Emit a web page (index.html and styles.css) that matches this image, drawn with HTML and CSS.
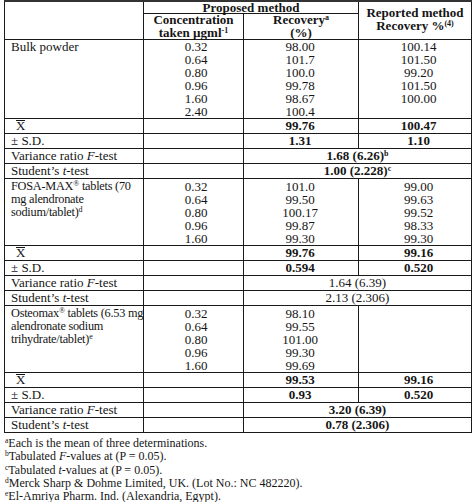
FILE: index.html
```html
<!DOCTYPE html>
<html>
<head>
<meta charset="utf-8">
<link rel="stylesheet" href="styles.css">
</head>
<body>
<table class="tbl">
  <colgroup>
    <col class="c1"><col class="c2"><col class="c3"><col class="c4">
  </colgroup>
  <thead>
    <tr>
      <th rowspan="2" class="blank"></th>
      <th colspan="2" class="top">Proposed method</th>
      <th rowspan="2" class="rep">Reported method<br>Recovery %<sup>(4)</sup></th>
    </tr>
    <tr>
      <th class="sub">Concentration<br>taken µgml<sup>-1</sup></th>
      <th class="sub">Recovery<sup>a</sup><br>(%)</th>
    </tr>
  </thead>
  <tbody>
    <tr class="data first">
      <td class="label">Bulk powder</td>
      <td class="conc">0.32<br>0.64<br>0.80<br>0.96<br>1.60<br>2.40</td>
      <td class="val">98.00<br>101.7<br>100.0<br>99.78<br>98.67<br>100.4</td>
      <td class="rval">100.14<br>101.50<br>99.20<br>101.50<br>100.00</td>
    </tr>
    <tr class="stat"><td class="label"><span class="xbar">X</span></td><td></td><td class="val b">99.76</td><td class="rval b">100.47</td></tr>
    <tr class="stat"><td class="label">± S.D.</td><td></td><td class="val b">1.31</td><td class="rval b">1.10</td></tr>
    <tr class="stat"><td class="label">Variance ratio <i>F</i>-test</td><td></td><td colspan="2" class="span b">1.68 (6.26)<sup>b</sup></td></tr>
    <tr class="stat"><td class="label">Student’s <i>t</i>-test</td><td></td><td colspan="2" class="span b">1.00 (2.228)<sup>c</sup></td></tr>

    <tr class="data">
      <td class="label tight">FOSA-MAX<sup>®</sup> tablets (70<br>mg alendronate<br>sodium/tablet)<sup>d</sup></td>
      <td class="conc">0.32<br>0.64<br>0.80<br>0.96<br>1.60</td>
      <td class="val">101.0<br>99.50<br>100.17<br>99.87<br>99.30</td>
      <td class="rval">99.00<br>99.63<br>99.52<br>98.33<br>99.30</td>
    </tr>
    <tr class="stat"><td class="label"><span class="xbar">X</span></td><td></td><td class="val b">99.76</td><td class="rval b">99.16</td></tr>
    <tr class="stat"><td class="label">± S.D.</td><td></td><td class="val b">0.594</td><td class="rval b">0.520</td></tr>
    <tr class="stat"><td class="label">Variance ratio <i>F</i>-test</td><td></td><td colspan="2" class="span">1.64 (6.39)</td></tr>
    <tr class="stat"><td class="label">Student’s <i>t</i>-test</td><td></td><td colspan="2" class="span">2.13 (2.306)</td></tr>

    <tr class="data">
      <td class="label tight">Osteomax<sup>®</sup> tablets (6.53 mg<br>alendronate sodium<br>trihydrate/tablet)<sup>e</sup></td>
      <td class="conc">0.32<br>0.64<br>0.80<br>0.96<br>1.60</td>
      <td class="val">98.10<br>99.55<br>101.00<br>99.30<br>99.69</td>
      <td class="rval"></td>
    </tr>
    <tr class="stat"><td class="label"><span class="xbar">X</span></td><td></td><td class="val b">99.53</td><td class="rval b">99.16</td></tr>
    <tr class="stat"><td class="label">± S.D.</td><td></td><td class="val b">0.93</td><td class="rval b">0.520</td></tr>
    <tr class="stat"><td class="label">Variance ratio <i>F</i>-test</td><td></td><td colspan="2" class="span b">3.20 (6.39)</td></tr>
    <tr class="stat"><td class="label">Student’s <i>t</i>-test</td><td></td><td colspan="2" class="span b">0.78 (2.306)</td></tr>
  </tbody>
</table>
<div class="notes">
  <p><sup>a</sup>Each is the mean of three determinations.</p>
  <p><sup>b</sup>Tabulated <i>F</i>-values at (P = 0.05).</p>
  <p><sup>c</sup>Tabulated <i>t</i>-values at (P = 0.05).</p>
  <p><sup>d</sup>Merck Sharp &amp; Dohme Limited, UK. (Lot No.: NC 482220).</p>
  <p><sup>e</sup>El-Amriya Pharm. Ind. (Alexandria, Egypt).</p>
</div>
</body>
</html>
```
FILE: styles.css
```css
html, body {
  margin: 0;
  padding: 0;
  background: #ffffff;
}
body {
  font-family: "Liberation Serif", "Times New Roman", serif;
  font-size: 13px;
  color: #151515;
}
.tbl {
  margin: 0 0 0 4px;
  width: 467px;
  border-collapse: collapse;
  table-layout: fixed;
  border-top: 2px solid #333;
}
.c1 { width: 139px; }
.c2 { width: 100px; }
.c3 { width: 115px; }
.c4 { width: 113px; }
.tbl th, .tbl td {
  border: 1px solid #1a1a1a;
  padding: 0;
  line-height: 13px;
}
.tbl th {
  font-weight: bold;
  text-align: center;
}
.tbl th.top {
  height: 11px;
  line-height: 11px;
}
.tbl th.sub {
  height: 25px;
  line-height: 12.5px;
}
.tbl th.rep {
  line-height: 13px;
  padding-bottom: 4px;
}
sup {
  font-size: 8px;
  line-height: 0;
  vertical-align: 4px;
}
.tbl td {
  vertical-align: top;
}
.tbl td.label {
  padding-left: 6px;
  white-space: nowrap;
  overflow: visible;
}
.tbl td.tight {
  font-size: 12.3px;
  letter-spacing: -0.25px;
}
.tbl td.conc {
  text-align: center;
  padding-left: 5px;
}
.tbl td.val {
  text-align: center;
  padding-right: 2px;
}
.tbl td.rval {
  text-align: center;
  padding-left: 7px;
}
.tbl td.span {
  text-align: center;
}
.tbl td.b {
  font-weight: bold;
}
.data td {
  padding-top: 1px;
  padding-bottom: 0;
}
.data.first td {
  padding-top: 0;
  padding-bottom: 0;
}
.stat td {
  height: 14px;
  line-height: 14px;
}
.xbar {
  display: inline-block;
  margin-left: 5px;
  line-height: 10px;
  border-top: 1px solid #151515;
}
.notes {
  margin: 4px 0 0 5px;
  font-size: 12px;
}
.notes p {
  margin: 0;
  line-height: 13.3px;
}
.notes sup {
  font-size: 7.5px;
}
```
